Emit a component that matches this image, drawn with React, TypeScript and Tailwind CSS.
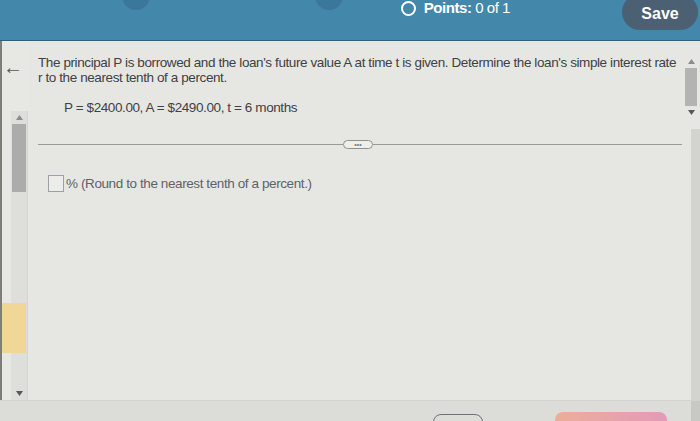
import React from "react";

const font = { fontFamily: '"Liberation Sans", Arial, sans-serif' };

function ScrollArrow({ up }: { up?: boolean }) {
  return (
    <svg width="7" height="5" viewBox="0 0 7 5" className="block">
      {up ? <path d="M0 5 L3.5 0 L7 5 Z" fill="#8a8d90" /> : <path d="M0 0 L3.5 5 L7 0 Z" fill="#55585c" />}
    </svg>
  );
}

function Header() {
  return (
    <div className="relative h-[41px] shrink-0 overflow-hidden border-b border-[#2f5f78] bg-[#4388ab]">
      <div className="absolute left-[122px] top-[-18px] h-[28px] w-[28px] rounded-full bg-[#3b779a]" />
      <div className="absolute left-[315px] top-[-18px] h-[28px] w-[28px] rounded-full bg-[#3b779a]" />
      <div className="flex h-full items-start justify-end pr-[2px]">
        <div className="mr-[112px] mt-[-3px] flex items-center gap-[8px] text-[15px] text-white">
          <span className="h-[15px] w-[15px] rounded-full border-2 border-white" />
          <span className="tracking-[-0.03em]">
            <b>Points:</b> 0 of 1
          </span>
        </div>
        <div className="mt-[-6px] flex h-[36px] w-[76px] items-center justify-center rounded-full bg-[#4b6072] pt-[4px] text-[16px] font-bold text-white">
          Save
        </div>
      </div>
    </div>
  );
}

function LeftRail() {
  return (
    <div className="relative flex w-[30px] shrink-0 flex-col border-l-[2px] border-[#7d7e7a] bg-[#e7e8e3]">
      <div className="ml-[1px] mt-[16px] text-[20px] leading-none text-[#555]">←</div>
      <div className="ml-[9px] mt-[34px] flex w-[17px] flex-1 flex-col items-center border-r border-[#d3d4cf] bg-[#dedfda] py-[4px]">
        <ScrollArrow up />
        <div className="mt-[4px] h-[68px] w-[14px] bg-[#acadab]" />
        <div className="flex-1" />
        <ScrollArrow />
      </div>
      <div className="absolute left-0 top-[262px] h-[50px] w-[24px] bg-[#f0d797]" />
    </div>
  );
}

function RightRail() {
  return (
    <div className="flex w-[18px] shrink-0 flex-col items-center pt-[16px]">
      <div className="flex flex-col items-center gap-[4px] py-[2px]">
        <ScrollArrow up />
        <div className="h-[38px] w-[12px] bg-[#b3b4b1]" />
        <ScrollArrow />
      </div>
      <div className="mt-[12px] w-[9px] flex-1 self-end bg-[#d3d4cf]" />
    </div>
  );
}

export default function App() {
  return (
    <div className="flex h-[421px] w-[700px] flex-col overflow-hidden bg-[#e6e7e2]" style={font}>
      <Header />
      <div className="flex flex-1">
        <LeftRail />
        <div className="flex flex-1 flex-col pt-[14px] pl-[8px] text-[#3f4144]">
          <p className="text-[13.5px] leading-[15px] tracking-[-0.03em]">
            The principal P is borrowed and the loan's future value A at time t is given. Determine the loan's simple interest rate
            <br />r to the nearest tenth of a percent.
          </p>
          <p className="mt-[13px] pl-[26px] text-[13.5px] tracking-[-0.03em]">
            P = $2400.00, A = $2490.00, t = 6 months
          </p>
          <div className="mt-[22px] flex items-center">
            <div className="h-px w-[305px] bg-[#9a9b98]" />
            <div className="flex h-[9px] w-[30px] items-center justify-center rounded-full border border-[#8f9190] bg-[#eeefea] text-[7px] leading-none text-[#777]">
              •••
            </div>
            <div className="h-px flex-1 bg-[#9a9b98]" />
          </div>
          <div className="mt-[23px] flex items-center pl-[10px] text-[13.5px] tracking-[-0.03em] text-[#5e6268]">
            <span className="h-[17px] w-[16px] border border-[#9da1a6] bg-[#ecedea]" />
            <span className="ml-[2px] mt-[2px]">% (Round to the nearest tenth of a percent.)</span>
          </div>
          <div className="flex-1" />
        </div>
        <RightRail />
      </div>
      <div className="relative h-[21px] shrink-0 border-t border-[#d2d3ce] bg-[#dcddd8]">
        <div className="absolute left-[433px] top-[13px] h-[14px] w-[50px] rounded-t-[8px] border border-[#6f7175]" />
        <div className="absolute left-[555px] top-[11px] h-[14px] w-[112px] rounded-t-[8px] bg-gradient-to-r from-[#ecae9a] to-[#e39ab8]" />
        <div className="absolute right-0 top-0 h-full w-[9px] bg-[#c8c9c4]" />
      </div>
    </div>
  );
}
